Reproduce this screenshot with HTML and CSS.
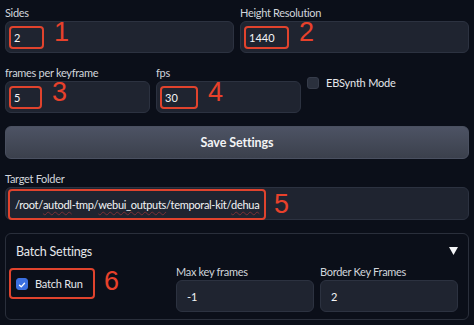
FILE: index.html
```html
<!DOCTYPE html>
<html>
<head>
<meta charset="utf-8">
<link rel="stylesheet" href="styles.css">
</head>
<body>
<div class="page">
  <div class="row row-two">
    <div class="field">
      <div class="label">Sides</div>
      <div class="input">
        <span class="hl w-sides">2</span>
        <span class="num">1</span>
      </div>
    </div>
    <div class="field">
      <div class="label">Height Resolution</div>
      <div class="input">
        <span class="hl w-height">1440</span>
        <span class="num">2</span>
      </div>
    </div>
  </div>

  <div class="row row-three">
    <div class="field">
      <div class="label">frames per keyframe</div>
      <div class="input">
        <span class="hl w-frames">5</span>
        <span class="num">3</span>
      </div>
    </div>
    <div class="field">
      <div class="label">fps</div>
      <div class="input">
        <span class="hl w-fps">30</span>
        <span class="num">4</span>
      </div>
    </div>
    <div class="check-col">
      <span class="box"></span>
      <span class="check-text">EBSynth Mode</span>
    </div>
  </div>

  <button class="save">Save Settings</button>

  <div class="field">
    <div class="label">Target Folder</div>
    <div class="input input-target">
      <span class="hl hl-target">/root/<span class="sp">autodl</span>-tmp/<span class="sp">webui_outputs</span>/temporal-kit/<span class="sp">dehua</span></span>
      <span class="num num-mid">5</span>
    </div>
  </div>

  <div class="panel">
    <div class="panel-head">
      <span class="panel-title">Batch Settings</span>
      <svg class="tri" width="9" height="8" viewBox="0 0 9 8"><path d="M0 0H9L4.5 8Z" fill="#f3f4f6"/></svg>
    </div>
    <div class="panel-row">
      <div class="batch-col">
        <div class="batch-hl">
          <span class="box box-on">
            <svg width="12" height="12" viewBox="0 0 12 12"><path d="M3 6.2L5.1 8.2L9 3.9" stroke="#fff" stroke-width="1.6" fill="none" stroke-linecap="round" stroke-linejoin="round"/></svg>
          </span>
          <span class="check-text">Batch Run</span>
        </div>
        <span class="num num-six">6</span>
      </div>
      <div class="field">
        <div class="label">Max key frames</div>
        <div class="input input-plain">-1</div>
      </div>
      <div class="field">
        <div class="label">Border Key Frames</div>
        <div class="input input-plain">2</div>
      </div>
    </div>
  </div>
</div>
</body>
</html>
```

FILE: styles.css
```css
html, body {
  margin: 0;
  padding: 0;
  background: #0b0f19;
}
body {
  font-family: Lato, "Noto Sans", sans-serif;
  color: #e5e7eb;
  width: 474px;
  height: 325px;
  overflow: hidden;
}
.page {
  padding: 6px 5px 0 5px;
  display: flex;
  flex-direction: column;
  gap: 13px;
}
.row {
  display: grid;
  gap: 6px;
}
.row-two {
  grid-template-columns: 1fr 1fr;
}
.row-three {
  grid-template-columns: 145px 145px 1fr;
}
.field {
  display: flex;
  flex-direction: column;
  gap: 1px;
}
.label {
  font-size: 11px;
  line-height: 14px;
  letter-spacing: -0.3px;
  color: #d1d5db;
}
.input {
  box-sizing: border-box;
  height: 32px;
  background: #1f2430;
  border: 1px solid #2c3240;
  border-radius: 6px;
  display: flex;
  align-items: center;
  padding: 0 3px;
  font-size: 11px;
  color: #f3f4f6;
}
.hl {
  box-sizing: border-box;
  height: 23px;
  border: 2px solid #e0432d;
  border-radius: 4px;
  display: flex;
  align-items: center;
  padding-left: 3px;
}
.w-sides { width: 35px; }
.w-height { width: 45px; }
.w-frames { width: 33px; }
.w-fps { width: 38px; }
.num {
  font-family: "Liberation Sans", sans-serif;
  font-size: 27px;
  line-height: 20px;
  color: #e8412b;
  margin-left: 10px;
  margin-top: -10px;
}
.check-col {
  display: flex;
  align-items: center;
  gap: 7px;
  padding-top: 10px;
  align-self: start;
}
.box {
  box-sizing: border-box;
  width: 12px;
  height: 12px;
  border-radius: 3px;
  background: #2a303d;
  border: 1px solid #363c4a;
  display: inline-flex;
}
.check-text {
  font-size: 11px;
  letter-spacing: -0.2px;
  color: #e5e7eb;
}
.save {
  box-sizing: border-box;
  height: 33px;
  border: 1px solid #4a5060;
  border-radius: 6px;
  background: linear-gradient(#4d5364, #3b404c);
  color: #f3f4f6;
  font-family: Lato, "Noto Sans", sans-serif;
  font-weight: 700;
  font-size: 12.5px;
  letter-spacing: -0.1px;
  padding: 0;
}
.input-target {
  padding: 0 0 0 2px;
  height: 33px;
}
.hl-target {
  height: 31px;
  width: 258px;
  margin-top: 2px;
  padding-left: 5px;
  white-space: nowrap;
  font-size: 11px;
  letter-spacing: -0.3px;
}
.sp {
  text-decoration: underline wavy rgba(200, 60, 60, 0.5);
  text-decoration-thickness: 1px;
  text-underline-offset: 2px;
}
.num-mid {
  margin-top: 0;
  margin-left: 8px;
}
.panel {
  box-sizing: border-box;
  height: 87px;
  border: 1px solid #2a2f3b;
  border-radius: 6px;
  padding: 6px 10px 0 10px;
  display: flex;
  flex-direction: column;
}
.panel-head {
  display: flex;
  justify-content: space-between;
  align-items: center;
  height: 22px;
}
.panel-title {
  font-size: 12.5px;
  letter-spacing: -0.2px;
  color: #e5e7eb;
}
.panel-row {
  display: grid;
  grid-template-columns: 154px 138px 1fr;
  gap: 6px;
  margin-top: 3px;
}
.batch-col {
  display: flex;
  align-items: flex-start;
}
.batch-hl {
  box-sizing: border-box;
  margin-left: -7px;
  width: 86px;
  height: 31px;
  border: 2px solid #e0432d;
  border-radius: 4px;
  display: flex;
  align-items: center;
  gap: 7px;
  padding-left: 5px;
  margin-top: 3px;
}
.box-on {
  background: #3b6fe0;
  border-color: #3b6fe0;
}
.num-six {
  margin-left: 9px;
  margin-top: 6px;
}
.input-plain {
  padding-left: 10px;
}
```
